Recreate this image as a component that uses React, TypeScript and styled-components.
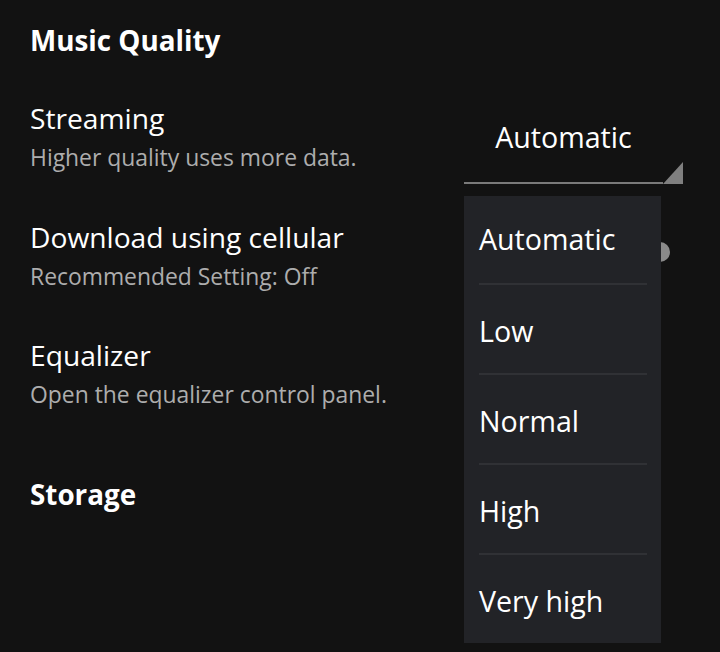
import React from "react";
import styled, { createGlobalStyle } from "styled-components";

const Global = createGlobalStyle`
  *, *::before, *::after { box-sizing: border-box; }
  html, body { margin: 0; padding: 0; background: #121212; }
  body { font-family: "Open Sans", "Noto Sans", sans-serif; color: #ffffff; }
`;

const Page = styled.div`
  width: 720px;
  height: 652px;
  overflow: hidden;
  background: #121212;
  padding: 24px 37px 0 30px;
  display: flex;
  flex-direction: column;
`;

const SectionTitle = styled.h2<{ $top: number }>`
  margin: ${(p) => p.$top}px 0 0;
  font-size: 27.8px;
  line-height: 32px;
  font-weight: 700;
  color: #ffffff;
`;

const RowList = styled.div`
  margin-top: 46px;
  display: flex;
  flex-direction: column;
`;

const Row = styled.div`
  display: flex;
  align-items: flex-start;
  justify-content: space-between;
  height: 118.5px;
`;

const TextBlock = styled.div`
  display: flex;
  flex-direction: column;
`;

const RowTitle = styled.div`
  font-size: 28.2px;
  line-height: 32px;
  color: #ffffff;
`;

const RowSub = styled.div`
  font-size: 22.9px;
  line-height: 28px;
  margin-top: 10px;
  color: #adadad;
`;

const SelectWrap = styled.div`
  position: relative;
  width: 219px;
`;

const SelectButton = styled.div`
  display: flex;
  align-items: flex-end;
  height: 82px;
`;

const SelectValue = styled.div`
  width: 199px;
  height: 100%;
  border-bottom: 2px solid #7a7a7a;
  text-align: center;
  font-size: 28.6px;
  line-height: 34px;
  padding-top: 18px;
`;

const Caret = styled.svg`
  display: block;
  flex: none;
`;

const Menu = styled.ul`
  position: absolute;
  left: 0;
  top: 94px;
  width: 197px;
  margin: 0;
  padding: 0;
  list-style: none;
  background: #222327;
  z-index: 2;
`;

const MenuItem = styled.li`
  height: 90px;
  margin: 0 14px 0 15px;
  font-size: 28.6px;
  line-height: 34px;
  padding-top: 29px;
  color: #ffffff;
  border-top: 2px solid #303135;
  &:first-child {
    height: 87px;
    padding-top: 26px;
    border-top: none;
  }
`;

const Switch = styled.div`
  position: relative;
  width: 33px;
  height: 20px;
  margin-top: 21.5px;
`;

const Knob = styled.div`
  position: absolute;
  left: 0;
  top: 0;
  width: 20px;
  height: 20px;
  border-radius: 50%;
  background: #8a8a8a;
`;

const options = ["Automatic", "Low", "Normal", "High", "Very high"];

export default function App() {
  return (
    <>
      <Global />
      <Page>
        <SectionTitle $top={0}>Music Quality</SectionTitle>
        <RowList>
          <Row>
            <TextBlock>
              <RowTitle>Streaming</RowTitle>
              <RowSub>Higher quality uses more data.</RowSub>
            </TextBlock>
            <SelectWrap>
              <SelectButton>
                <SelectValue>Automatic</SelectValue>
                <Caret width="20" height="22" viewBox="0 0 20 22">
                  <polygon points="0,22 20,22 20,0" fill="#7f7f7f" />
                </Caret>
              </SelectButton>
              <Menu>
                {options.map((o) => (
                  <MenuItem key={o}>{o}</MenuItem>
                ))}
              </Menu>
            </SelectWrap>
          </Row>
          <Row>
            <TextBlock>
              <RowTitle>Download using cellular</RowTitle>
              <RowSub>Recommended Setting: Off</RowSub>
            </TextBlock>
            <Switch>
              <Knob />
            </Switch>
          </Row>
          <Row>
            <TextBlock>
              <RowTitle>Equalizer</RowTitle>
              <RowSub>Open the equalizer control panel.</RowSub>
            </TextBlock>
          </Row>
        </RowList>
        <SectionTitle $top={20}>Storage</SectionTitle>
      </Page>
    </>
  );
}
